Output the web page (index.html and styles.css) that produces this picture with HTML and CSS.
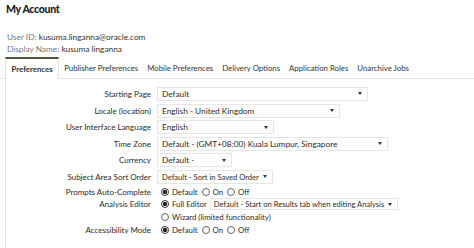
FILE: index.html
```html
<!DOCTYPE html>
<html>
<head>
    <title>My Account</title>
    <link rel="stylesheet" href="styles.css">
</head>
<body>
    <div class="page">
        <!-- header -->
        <h1 class="title">My Account</h1>
        <div class="user-info">
            <div><span class="key">User ID:</span> kusuma.linganna@oracle.com</div>
            <div><span class="key">Display Name:</span> kusuma linganna</div>
        </div>

        <!-- tabs -->
        <div class="tabs">
            <div class="tab active">Preferences</div>
            <div class="tab">Publisher Preferences</div>
            <div class="tab">Mobile Preferences</div>
            <div class="tab">Delivery Options</div>
            <div class="tab">Application Roles</div>
            <div class="tab">Unarchive Jobs</div>
        </div>

        <!-- preferences form -->
        <div class="panel">
            <div class="form">
                <div class="label">Starting Page</div>
                <div class="field"><div class="select sel-start"><span>Default</span><i class="arrow"></i></div></div>

                <div class="label">Locale (location)</div>
                <div class="field"><div class="select sel-locale"><span>English - United Kingdom</span><i class="arrow"></i></div></div>

                <div class="label">User Interface Language</div>
                <div class="field"><div class="select sel-lang"><span>English</span><i class="arrow"></i></div></div>

                <div class="label">Time Zone</div>
                <div class="field"><div class="select sel-tz"><span>Default - (GMT+08:00) Kuala Lumpur, Singapore</span><i class="arrow"></i></div></div>

                <div class="label">Currency</div>
                <div class="field"><div class="select sel-currency"><span>Default -</span><i class="arrow"></i></div></div>

                <div class="label">Subject Area Sort Order</div>
                <div class="field"><div class="select sel-sort"><span>Default - Sort in Saved Order</span><i class="arrow"></i></div></div>

                <div class="label small">Prompts Auto-Complete</div>
                <div class="field small">
                    <span class="radio checked"></span>Default
                    <span class="radio"></span>On
                    <span class="radio"></span>Off
                </div>

                <div class="label small">Analysis Editor</div>
                <div class="field small">
                    <span class="radio checked"></span>Full Editor
                    <div class="select sel-editor"><span>Default - Start on Results tab when editing Analysis</span><i class="arrow"></i></div>
                </div>

                <div class="label small"></div>
                <div class="field small">
                    <span class="radio"></span>Wizard (limited functionality)
                </div>

                <div class="label small">Accessibility Mode</div>
                <div class="field small">
                    <span class="radio checked"></span>Default
                    <span class="radio"></span>On
                    <span class="radio"></span>Off
                </div>
            </div>
        </div>
    </div>
</body>
</html>
```

FILE: styles.css
```css
/* page */
body {
    margin: 0;
    padding: 0;
    background-color: #fff;
    font-family: Lato, "Open Sans", sans-serif;
    font-size: 8px;
    color: #2b2b2b;
}

.page {
    padding: 2px 0 0 0;
}

.title {
    margin: 0 0 0 6px;
    font-size: 10.5px;
    line-height: 14px;
    font-weight: 900;
    letter-spacing: -0.3px;
    color: #222;
}

.user-info {
    margin: 15px 0 0 7px;
    line-height: 12px;
    font-size: 8.3px;
    color: #333;
}

.user-info .key {
    color: #777;
}

/* tabs */
.tabs {
    display: flex;
    margin-top: 2px;
    height: 21px;
    border-bottom: 1px solid #e3e3e3;
    font-size: 7.8px;
}

.tab {
    display: flex;
    align-items: center;
    padding: 0 4.5px;
    color: #333;
}

.tab.active {
    margin-left: 5px;
    margin-right: 0.5px;
    padding: 0 5.5px;
    font-weight: bold;
    border-top: 2px solid #4a5640;
    border-left: 1px solid #e3e3e3;
    border-right: 1px solid #e3e3e3;
    background: #fff;
    margin-bottom: -1px;
}

/* form */
.panel {
    margin-left: 5px;
    border-left: 1px solid #e3e3e3;
    padding-top: 6.7px;
    height: 170px;
}

.form {
    display: grid;
    grid-template-columns: 145px auto;
    column-gap: 6px;
}

.label {
    height: 16.6px;
    display: flex;
    align-items: center;
    justify-content: flex-end;
}

.field {
    height: 16.6px;
    display: flex;
    align-items: center;
}

.label.small,
.field.small {
    height: 12.8px;
}

.field.small {
    font-size: 7.8px;
}

.select {
    box-sizing: border-box;
    height: 14px;
    display: flex;
    align-items: center;
    justify-content: space-between;
    gap: 4px;
    padding: 0 5px 0 4px;
    border: 1px solid #e6e6e6;
    background: #fff;
    white-space: nowrap;
    font-size: 8.3px;
}

.arrow {
    flex: none;
    width: 0;
    height: 0;
    border-left: 2.5px solid transparent;
    border-right: 2.5px solid transparent;
    border-top: 3px solid #333;
}

.sel-start { width: 211px; }
.sel-locale { width: 183px; }
.sel-lang { width: 117px; }
.sel-tz { width: 231px; }
.sel-currency { width: 75px; }
.sel-sort {
    min-width: 110px;
    font-size: 7.6px;
}
.sel-editor {
    min-width: 184px;
    height: 12px;
    margin-left: 3px;
    padding-left: 3px;
    font-size: 7.6px;
}

.radio {
    box-sizing: border-box;
    display: inline-block;
    width: 8px;
    height: 8px;
    border: 1px solid #666;
    border-radius: 50%;
    margin: 0 3px 0 4px;
    background: #fff;
}

.radio.checked {
    border: 1.5px solid #333;
    background: radial-gradient(circle, #222 0 2px, #fff 2.3px);
}
```
